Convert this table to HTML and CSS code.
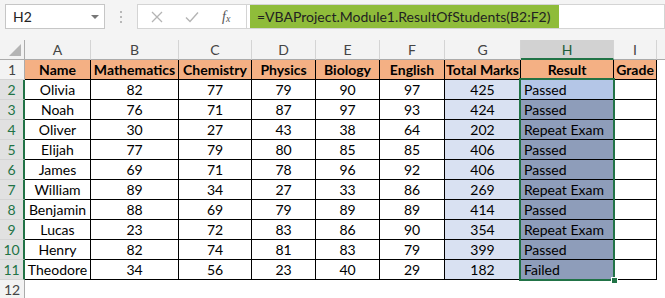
FILE: index.html
```html
<!DOCTYPE html>
<html>
<head>
<meta charset="utf-8">
<link rel="stylesheet" href="styles.css">
</head>
<body>
<div class="app">
  <div class="topbar">
    <div class="namebox"><span class="nb-text">H2</span><span class="nb-arrow"></span></div>
    <div class="grip"><i></i><i></i><i></i></div>
    <div class="fbtns">
      <svg class="ic-x" width="12" height="12" viewBox="0 0 12 12"><path d="M1 1 L11 11 M11 1 L1 11" stroke="#b4b4b4" stroke-width="1.3" fill="none"/></svg>
      <svg class="ic-ok" width="14" height="12" viewBox="0 0 14 12"><path d="M1 6.5 L5 10.5 L13 1.5" stroke="#b4b4b4" stroke-width="1.4" fill="none"/></svg>
      <span class="fx">f<sub>x</sub></span>
    </div>
    <div class="finput"><span class="formula">=VBAProject.Module1.ResultOfStudents(B2:F2)</span></div>
  </div>
  <div class="sheet">
    <div class="grid">
      <div class="ch corner"><span class="tri"></span></div>
      <div class="ch">A</div><div class="ch">B</div><div class="ch">C</div><div class="ch">D</div><div class="ch">E</div><div class="ch">F</div><div class="ch">G</div><div class="ch ch-sel">H</div><div class="ch">I</div><div class="ch ch-rest"></div>

      <div class="rh">1</div>
      <div class="c hd">Name</div><div class="c hd">Mathematics</div><div class="c hd">Chemistry</div><div class="c hd">Physics</div><div class="c hd">Biology</div><div class="c hd">English</div><div class="c hd">Total Marks</div><div class="c hd">Result</div><div class="c hd">Grade</div><div class="rest"></div>

      <div class="rh rh-sel">2</div>
      <div class="c">Olivia</div><div class="c">82</div><div class="c">77</div><div class="c">79</div><div class="c">90</div><div class="c">97</div><div class="c tot">425</div><div class="c res active">Passed</div><div class="c"></div><div class="rest"></div>

      <div class="rh rh-sel">3</div>
      <div class="c">Noah</div><div class="c">76</div><div class="c">71</div><div class="c">87</div><div class="c">97</div><div class="c">93</div><div class="c tot">424</div><div class="c res">Passed</div><div class="c"></div><div class="rest"></div>

      <div class="rh rh-sel">4</div>
      <div class="c">Oliver</div><div class="c">30</div><div class="c">27</div><div class="c">43</div><div class="c">38</div><div class="c">64</div><div class="c tot">202</div><div class="c res">Repeat Exam</div><div class="c"></div><div class="rest"></div>

      <div class="rh rh-sel">5</div>
      <div class="c">Elijah</div><div class="c">77</div><div class="c">79</div><div class="c">80</div><div class="c">85</div><div class="c">85</div><div class="c tot">406</div><div class="c res">Passed</div><div class="c"></div><div class="rest"></div>

      <div class="rh rh-sel">6</div>
      <div class="c">James</div><div class="c">69</div><div class="c">71</div><div class="c">78</div><div class="c">96</div><div class="c">92</div><div class="c tot">406</div><div class="c res">Passed</div><div class="c"></div><div class="rest"></div>

      <div class="rh rh-sel">7</div>
      <div class="c">William</div><div class="c">89</div><div class="c">34</div><div class="c">27</div><div class="c">33</div><div class="c">86</div><div class="c tot">269</div><div class="c res">Repeat Exam</div><div class="c"></div><div class="rest"></div>

      <div class="rh rh-sel">8</div>
      <div class="c">Benjamin</div><div class="c">88</div><div class="c">69</div><div class="c">79</div><div class="c">89</div><div class="c">89</div><div class="c tot">414</div><div class="c res">Passed</div><div class="c"></div><div class="rest"></div>

      <div class="rh rh-sel">9</div>
      <div class="c">Lucas</div><div class="c">23</div><div class="c">72</div><div class="c">83</div><div class="c">86</div><div class="c">90</div><div class="c tot">354</div><div class="c res">Repeat Exam</div><div class="c"></div><div class="rest"></div>

      <div class="rh rh-sel">10</div>
      <div class="c">Henry</div><div class="c">82</div><div class="c">74</div><div class="c">81</div><div class="c">83</div><div class="c">79</div><div class="c tot">399</div><div class="c res">Passed</div><div class="c"></div><div class="rest"></div>

      <div class="rh rh-sel">11</div>
      <div class="c">Theodore</div><div class="c">34</div><div class="c">56</div><div class="c">23</div><div class="c">40</div><div class="c">29</div><div class="c tot">182</div><div class="c res">Failed</div><div class="c"></div><div class="rest"></div>

      <div class="rh">12</div>
      <div class="e"></div><div class="e"></div><div class="e"></div><div class="e"></div><div class="e"></div><div class="e"></div><div class="e"></div><div class="e"></div><div class="e"></div><div class="rest"></div>
    </div>
    <div class="selection"><span class="handle"></span></div>
  </div>
</div>
</body>
</html>
```
FILE: styles.css
```css
* { box-sizing: border-box; }
html, body { margin: 0; padding: 0; background: #fff; }
body { width: 665px; height: 298px; overflow: hidden; font-family: Lato, "Open Sans", sans-serif; }

.app { display: flex; flex-direction: column; }

.topbar {
  height: 40px;
  background: #f4f4f4;
  display: flex;
  align-items: flex-start;
  padding: 4px 0 0 5px;
}
.namebox {
  width: 100px; height: 25px;
  background: #fff;
  border: 1px solid #c6c6c6;
  display: flex; align-items: center; justify-content: space-between;
  padding: 0 5px 0 7px;
  font-size: 14px; color: #222;
}
.nb-arrow {
  width: 0; height: 0;
  border-left: 4px solid transparent;
  border-right: 4px solid transparent;
  border-top: 4px solid #777;
}
.grip {
  width: 32px; height: 25px;
  display: flex; flex-direction: column; align-items: center; justify-content: center; gap: 3px;
}
.grip i { display: block; width: 2px; height: 2px; background: #b8b8b8; }
.fbtns {
  width: 109px; height: 25px;
  background: #fff;
  border: 1px solid #d4d4d4;
  border-right: none;
  display: flex; align-items: center;
  padding-left: 13px;
}
.ic-x { margin-right: 22px; }
.ic-ok { margin-right: 23px; }
.fx { font-family: "Liberation Serif", serif; font-style: italic; font-size: 14px; color: #555; }
.fx sub { font-size: 10px; vertical-align: -1px; }
.finput {
  flex: 1; height: 25px;
  background: #fff;
  border: 1px solid #d4d4d4;
  padding: 0 0 0 3px;
  display: flex; align-items: stretch;
}
.formula {
  background: #8fbc3a;
  color: #222;
  font-size: 14px;
  padding: 0 9px 0 7px;
  display: flex; align-items: center;
}

.sheet { position: relative; }
.grid {
  display: grid;
  grid-template-columns: 25px 66px 88px 73px 64px 64px 65px 76px 93px 43px 1fr;
  grid-auto-rows: 20px;
}
.ch {
  background: #f3f3f3;
  border-right: 1px solid #d4d4d4;
  border-bottom: 1px solid #ababab;
  display: flex; align-items: center; justify-content: center;
  font-size: 14px; color: #444;
}
.ch-rest { border-right: none; }
.ch-sel {
  background: #d2d2d2;
  border-bottom: 2px solid #217346;
  color: #1e5d3b;
}
.corner { position: relative; border-right-color: #ababab; }
.tri {
  position: absolute; right: 3px; bottom: 3px;
  width: 0; height: 0;
  border-left: 12px solid transparent;
  border-bottom: 12px solid #b4b4b4;
}
.rh {
  background: #f3f3f3;
  border-right: 1px solid #ababab;
  border-bottom: 1px solid #d4d4d4;
  display: flex; align-items: center; justify-content: center;
  font-size: 14px; color: #444;
}
.rh-sel {
  background: #e1e1e1;
  color: #217346;
  border-right: 2px solid #217346;
}
.c {
  border-right: 1px solid #000;
  border-bottom: 1px solid #000;
  display: flex; align-items: center; justify-content: center;
  font-size: 14px; color: #000;
  white-space: nowrap; overflow: hidden;
}
.hd { background: #f4b084; font-weight: 700; }
.tot { background: #d9e1f2; }
.res { background: #8e9dba; justify-content: flex-start; padding-left: 3px; }
.res.active { background: #b4c6e7; }
.rest { background: #fff; }
.e { background: #fff; }

.selection {
  position: absolute;
  left: 519px; top: 38px;
  width: 96px; height: 203px;
  border: 2px solid #217346;
  pointer-events: none;
}
.handle {
  position: absolute;
  right: -5px; bottom: -5px;
  width: 7px; height: 7px;
  background: #217346;
  border: 1px solid #fff;
}
```
